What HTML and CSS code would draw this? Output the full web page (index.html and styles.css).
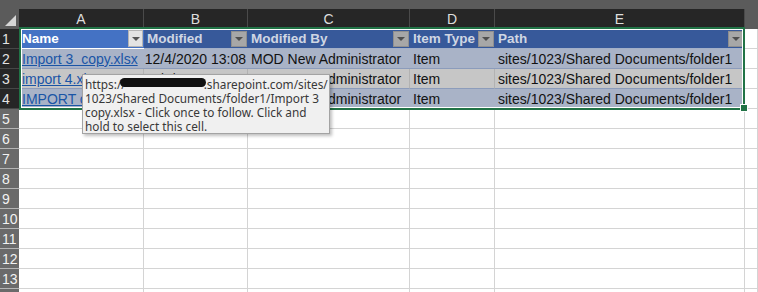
FILE: index.html
```html
<!DOCTYPE html>
<html>
<head>
<meta charset="utf-8">
<link rel="stylesheet" href="styles.css">
</head>
<body>
<div class="sheet">
  <div class="topbar"></div>
  <div class="grid">
    <div class="corner"><span class="tri"></span></div>
    <div class="colhd sel">A</div>
    <div class="colhd sel">B</div>
    <div class="colhd sel">C</div>
    <div class="colhd sel">D</div>
    <div class="colhd sel">E</div>
    <div class="colhd"></div>

    <div class="rowhd sel">1</div>
    <div class="cell th active"><span class="t">Name</span><span class="fbtn"></span></div>
    <div class="cell th"><span class="t">Modified</span><span class="fbtn"></span></div>
    <div class="cell th"><span class="t">Modified By</span><span class="fbtn"></span></div>
    <div class="cell th"><span class="t">Item Type</span><span class="fbtn"></span></div>
    <div class="cell th"><span class="t">Path</span><span class="fbtn"></span></div>
    <div class="cell"></div>

    <div class="rowhd sel">2</div>
    <div class="cell band"><a class="link">Import 3&nbsp; copy.xlsx</a></div>
    <div class="cell band num">12/4/2020 13:08</div>
    <div class="cell band">MOD New Administrator</div>
    <div class="cell band">Item</div>
    <div class="cell band">sites/1023/Shared Documents/folder1</div>
    <div class="cell"></div>

    <div class="rowhd sel">3</div>
    <div class="cell plain"><a class="link">import 4.xlsx</a></div>
    <div class="cell plain num">12/4/2020 13:08</div>
    <div class="cell plain">MOD New Administrator</div>
    <div class="cell plain">Item</div>
    <div class="cell plain">sites/1023/Shared Documents/folder1</div>
    <div class="cell"></div>

    <div class="rowhd sel">4</div>
    <div class="cell band"><a class="link">IMPORT copy.xlsx</a></div>
    <div class="cell band num">12/4/2020 13:08</div>
    <div class="cell band">MOD New Administrator</div>
    <div class="cell band">Item</div>
    <div class="cell band">sites/1023/Shared Documents/folder1</div>
    <div class="cell"></div>

    <div class="rowhd">5</div><div class="cell"></div><div class="cell"></div><div class="cell"></div><div class="cell"></div><div class="cell"></div><div class="cell"></div>
    <div class="rowhd">6</div><div class="cell"></div><div class="cell"></div><div class="cell"></div><div class="cell"></div><div class="cell"></div><div class="cell"></div>
    <div class="rowhd">7</div><div class="cell"></div><div class="cell"></div><div class="cell"></div><div class="cell"></div><div class="cell"></div><div class="cell"></div>
    <div class="rowhd">8</div><div class="cell"></div><div class="cell"></div><div class="cell"></div><div class="cell"></div><div class="cell"></div><div class="cell"></div>
    <div class="rowhd">9</div><div class="cell"></div><div class="cell"></div><div class="cell"></div><div class="cell"></div><div class="cell"></div><div class="cell"></div>
    <div class="rowhd">10</div><div class="cell"></div><div class="cell"></div><div class="cell"></div><div class="cell"></div><div class="cell"></div><div class="cell"></div>
    <div class="rowhd">11</div><div class="cell"></div><div class="cell"></div><div class="cell"></div><div class="cell"></div><div class="cell"></div><div class="cell"></div>
    <div class="rowhd">12</div><div class="cell"></div><div class="cell"></div><div class="cell"></div><div class="cell"></div><div class="cell"></div><div class="cell"></div>
    <div class="rowhd">13</div><div class="cell"></div><div class="cell"></div><div class="cell"></div><div class="cell"></div><div class="cell"></div><div class="cell"></div>
    <div class="rowhd"></div><div class="cell"></div><div class="cell"></div><div class="cell"></div><div class="cell"></div><div class="cell"></div><div class="cell"></div>
  </div>

  <div class="selection"><span class="handle"></span></div>

  <div class="tip">
    <div class="line">https://<span class="redact"></span>.sharepoint.com/sites/</div>
    <div class="line">1023/Shared Documents/folder1/Import 3</div>
    <div class="line">copy.xlsx - Click once to follow. Click and</div>
    <div class="line">hold to select this cell.</div>
  </div>
</div>
</body>
</html>
```

FILE: styles.css
```css
html, body {
  margin: 0;
  padding: 0;
  background: #ffffff;
  overflow: hidden;
}

.sheet {
  position: relative;
  width: 758px;
  height: 292px;
  overflow: hidden;
  font-family: "Liberation Sans", Arial, sans-serif;
  font-size: 14px;
}

.topbar {
  height: 9px;
  background: #5b5b5b;
}

.grid {
  display: grid;
  grid-template-columns: 19px 125px 104px 162px 85px 250px 1fr;
  grid-auto-rows: 20px;
}

.grid > div {
  box-sizing: border-box;
  min-width: 0;
}

.corner {
  background: #5b5b5b;
  margin-top: -9px;
  height: 29px;
  display: flex;
  align-items: flex-end;
  justify-content: flex-end;
  padding: 0 3px 3px 0;
}

.tri {
  width: 0;
  height: 0;
  border-left: 11px solid transparent;
  border-bottom: 11px solid #d6d6d6;
}

.colhd {
  background: #5b5b5b;
  color: #dedede;
  display: flex;
  align-items: center;
  justify-content: center;
  padding-top: 1px;
  font-size: 14px;
}

.colhd.sel {
  background: #262626;
  border-right: 1px solid #4a4a4a;
  border-bottom: 1px solid #217346;
}

.rowhd {
  background: #6a6a6a;
  color: #f2f2f2;
  display: flex;
  align-items: center;
  padding-left: 2px;
  border-bottom: 1px solid #b5b5b5;
  font-size: 14px;
}

.rowhd.sel {
  background: #262626;
  color: #e3e3e3;
  border-bottom: 1px solid #474747;
}

.cell {
  border-right: 1px solid #d4d4d4;
  border-bottom: 1px solid #d4d4d4;
  display: flex;
  align-items: center;
  padding-left: 3px;
  white-space: nowrap;
  overflow: hidden;
  color: #121212;
}

.cell.th {
  background: #37599a;
  color: #cfd6e3;
  font-weight: bold;
  font-size: 13.5px;
  border-right: none;
  border-bottom: 1px solid #a3b0c8;
  justify-content: space-between;
  padding-right: 1px;
}

.cell.th.active {
  background: #4472c4;
  color: #ffffff;
  border-bottom: 1px solid #ffffff;
}

.th .t {
  overflow: hidden;
}

.fbtn {
  flex: 0 0 auto;
  width: 16px;
  height: 16px;
  box-sizing: border-box;
  background: #a7a7a7;
  border: 1px solid #8f8f8f;
  display: flex;
  align-items: center;
  justify-content: center;
}

.fbtn::after {
  content: "";
  width: 0;
  height: 0;
  margin-top: 1px;
  border-left: 4px solid transparent;
  border-right: 4px solid transparent;
  border-top: 4px solid #4f4f4f;
}

.active .fbtn {
  background: #e3e3e3;
  border-color: #b4b4b4;
  height: 17px;
  width: 15px;
}

.active .fbtn::after {
  border-top-color: #555555;
}

.cell.band {
  background: #a9b3c7;
  border-right: none;
  border-bottom: 1px solid #8c9cbb;
}

.cell.plain {
  background: #c6c6c6;
  border-right: 1px solid #b2b2b2;
  border-bottom: 1px solid #8c9cbb;
}

.cell.num {
  justify-content: flex-end;
  padding-right: 2px;
}

.link {
  color: #1a55a6;
  text-decoration: underline;
}

.selection {
  position: absolute;
  left: 19px;
  top: 27px;
  width: 726px;
  height: 83px;
  box-sizing: border-box;
  border: 2px solid #217346;
  box-shadow: inset 0 0 0 1px #ffffff;
  pointer-events: none;
}

.handle {
  position: absolute;
  right: -4px;
  bottom: -3px;
  width: 6px;
  height: 6px;
  background: #217346;
  box-shadow: 0 0 0 1px #ffffff;
}

.tip {
  position: absolute;
  left: 82px;
  top: 74px;
  width: 248px;
  height: 60px;
  box-sizing: border-box;
  padding: 2px 0 0 2px;
  background: #f0f0f0;
  border: 1px solid #a3a3a3;
  box-shadow: 2px 2px 3px rgba(0, 0, 0, 0.25);
  font-family: "Noto Sans", "Open Sans", sans-serif;
  font-size: 11.8px;
  line-height: 14px;
  color: #383838;
}

.tip .line {
  white-space: nowrap;
}

.redact {
  display: inline-block;
  vertical-align: top;
  width: 86px;
  height: 9px;
  margin: 1px -2px 0 -6px;
  background: #111111;
  border-radius: 5px;
}
```
